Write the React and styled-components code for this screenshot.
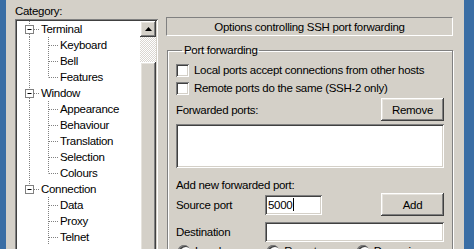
import React from 'react'
import styled, { createGlobalStyle } from 'styled-components'

const GlobalStyle = createGlobalStyle`
  html, body {
    margin: 0;
    padding: 0;
    background: #d4d0c8;
    overflow: hidden;
  }
  body {
    font-family: "Liberation Sans", Arial, sans-serif;
    font-size: 11.5px;
    letter-spacing: -0.3px;
    color: #000;
  }
`

const raised = `
  box-shadow: inset -1px -1px #404040, inset 1px 1px #ffffff,
    inset -2px -2px #808080, inset 2px 2px #e6e3dd;
`

const sunken = `
  box-shadow: inset 1px 1px #808080, inset -1px -1px #ffffff,
    inset 2px 2px #404040, inset -2px -2px #d4d0c8;
`

const Window = styled.div`
  display: flex;
  width: 474px;
  height: 249px;
  box-sizing: border-box;
  border-left: 6px solid #3a6ea5;
  border-right: 10px solid #3a6ea5;
  background: #d4d0c8;
  overflow: hidden;
`

const Sidebar = styled.div`
  display: flex;
  flex-direction: column;
  margin-left: 9px;
  width: 143px;
  padding-top: 4px;
  flex-shrink: 0;
`

const CategoryLabel = styled.div`
  height: 15px;
  line-height: 15px;
  flex-shrink: 0;
`

const TreeBox = styled.div`
  display: flex;
  flex-shrink: 0;
  height: 240px;
  padding: 2px;
  box-sizing: border-box;
  background: #fff;
  ${sunken}
`

const TreeList = styled.div`
  flex: 1;
  display: flex;
  flex-direction: column;
`

const TreeRow = styled.div`
  display: flex;
  align-items: center;
  height: 16px;
  flex-shrink: 0;
  white-space: nowrap;
  svg { flex-shrink: 0; }
`

const TreeText = styled.span`
  line-height: 15px;
`

const Scrollbar = styled.div`
  width: 16px;
  display: flex;
  flex-direction: column;
  flex-shrink: 0;
`

const ScrollButton = styled.div`
  width: 16px;
  height: 16px;
  flex-shrink: 0;
  box-sizing: border-box;
  background: #d4d0c8;
  display: flex;
  align-items: center;
  justify-content: center;
  ${raised}
`

const ScrollTrack = styled.div`
  height: ${p => p.$h}px;
  flex-shrink: 0;
  background-color: #ece9e3;
  background-image: repeating-conic-gradient(#ffffff 0 25%, #d4d0c8 0 50%);
  background-size: 2px 2px;
  opacity: 0.85;
`

const ScrollThumb = styled.div`
  flex: 1;
  background: #d4d0c8;
  ${raised}
`

const Panel = styled.div`
  display: flex;
  flex-direction: column;
  margin-left: 8px;
  width: 287px;
  padding-top: 17px;
  flex-shrink: 0;
`

const Header = styled.div`
  height: 19px;
  flex-shrink: 0;
  box-sizing: border-box;
  display: flex;
  align-items: center;
  justify-content: center;
  border-top: 1px solid #808080;
  border-left: 1px solid #808080;
  border-right: 1px solid #ffffff;
  border-bottom: 1px solid #ffffff;
  white-space: nowrap;
`

const Group = styled.fieldset`
  flex-shrink: 0;
  margin: 7px 0 0 1px;
  width: 286px;
  box-sizing: border-box;
  padding: 4px 8px 0 8px;
  border: 1px solid #808080;
  box-shadow: 1px 1px 0 #ffffff, inset 1px 1px 0 #ffffff;
  min-inline-size: 0;
`

const Legend = styled.legend`
  margin-left: 6px;
  padding: 0 2px;
  line-height: 14px;
  height: 14px;
`

const CheckRow = styled.label`
  display: flex;
  align-items: center;
  gap: 5px;
  height: 18px;
  white-space: nowrap;
`

const CheckBox = styled.span`
  width: 13px;
  height: 13px;
  box-sizing: border-box;
  background: #fff;
  flex-shrink: 0;
  ${sunken}
`

const Row = styled.div`
  display: flex;
  align-items: center;
  justify-content: ${p => (p.$spread ? 'space-between' : 'flex-start')};
  height: 23px;
  margin-top: ${p => p.$mt || 0}px;
  white-space: nowrap;
`

const Button = styled.div`
  width: 63px;
  height: 23px;
  box-sizing: border-box;
  display: flex;
  align-items: center;
  justify-content: center;
  background: #d4d0c8;
  margin-left: auto;
  ${raised}
`

const ListBox = styled.div`
  margin-top: 3px;
  height: 44px;
  background: #fff;
  ${sunken}
`

const SectionLabel = styled.div`
  margin-top: 10px;
  height: 15px;
  line-height: 15px;
`

const FieldLabel = styled.span`
  width: 89px;
  flex-shrink: 0;
`

const Input = styled.div`
  height: 20px;
  width: ${p => (p.$w ? `${p.$w}px` : 'auto')};
  flex: ${p => (p.$w ? '0 0 auto' : '1')};
  box-sizing: border-box;
  background: #fff;
  display: flex;
  align-items: center;
  padding-left: 3px;
  ${sunken}
`

const Caret = styled.span`
  width: 1px;
  height: 13px;
  background: #000;
  margin-left: 1px;
`

const RadioRow = styled.div`
  display: flex;
  margin-top: 2px;
  height: 16px;
`

const RadioOption = styled.label`
  display: flex;
  align-items: flex-start;
  gap: 5px;
  width: 93px;
  padding-left: 2px;
  white-space: nowrap;
`

const Radio = styled.span`
  width: 12px;
  height: 12px;
  border-radius: 50%;
  background: #fff;
  flex-shrink: 0;
  box-shadow: inset 1px 1px #808080, inset 2px 2px #404040,
    inset -1px -1px #ffffff;
  position: relative;
  &::after {
    content: '';
    display: ${p => (p.$on ? 'block' : 'none')};
    position: absolute;
    left: 4px;
    top: 4px;
    width: 4px;
    height: 4px;
    border-radius: 50%;
    background: #000;
  }
`

const dots = { stroke: '#808080', strokeWidth: 1, strokeDasharray: '1 1' }

const ParentGuide = ({ last }) => (
  <svg width="24" height="16" viewBox="0 0 24 16">
    <line x1="12.5" y1="0" x2="12.5" y2="4" {...dots} />
    {!last && <line x1="12.5" y1="13" x2="12.5" y2="16" {...dots} />}
    <line x1="17" y1="8.5" x2="23" y2="8.5" {...dots} />
    <rect x="8.5" y="4.5" width="8" height="8" fill="#fff" stroke="#808080" />
    <line x1="10.5" y1="8.5" x2="14.5" y2="8.5" stroke="#000" />
  </svg>
)

const ChildGuide = ({ parentLast, last }) => (
  <svg width="43" height="16" viewBox="0 0 43 16">
    {!parentLast && <line x1="12.5" y1="0" x2="12.5" y2="16" {...dots} />}
    <line x1="31.5" y1="0" x2="31.5" y2={last ? 8.5 : 16} {...dots} />
    <line x1="32" y1="8.5" x2="41" y2="8.5" {...dots} />
  </svg>
)

const tree = [
  { label: 'Terminal', children: ['Keyboard', 'Bell', 'Features'], closed: true },
  {
    label: 'Window',
    children: ['Appearance', 'Behaviour', 'Translation', 'Selection', 'Colours'],
    closed: true,
  },
  { label: 'Connection', children: ['Data', 'Proxy', 'Telnet'], closed: false, last: true },
]

const Tree = () => (
  <TreeList>
    {tree.map(node => (
      <React.Fragment key={node.label}>
        <TreeRow>
          <ParentGuide last={node.last} />
          <TreeText>{node.label}</TreeText>
        </TreeRow>
        {node.children.map((c, i) => (
          <TreeRow key={c}>
            <ChildGuide
              parentLast={node.last}
              last={node.closed && i === node.children.length - 1}
            />
            <TreeText>{c}</TreeText>
          </TreeRow>
        ))}
      </React.Fragment>
    ))}
  </TreeList>
)

export default function App() {
  return (
    <>
      <GlobalStyle />
      <Window>
        <Sidebar>
          <CategoryLabel>Category:</CategoryLabel>
          <TreeBox>
            <Tree />
            <Scrollbar>
              <ScrollButton>
                <svg width="7" height="4" viewBox="0 0 7 4">
                  <polygon points="3.5,0 7,4 0,4" fill="#000" />
                </svg>
              </ScrollButton>
              <ScrollTrack $h={25} />
              <ScrollThumb />
            </Scrollbar>
          </TreeBox>
        </Sidebar>
        <Panel>
          <Header>Options controlling SSH port forwarding</Header>
          <Group>
            <Legend>Port forwarding</Legend>
            <CheckRow>
              <CheckBox />
              Local ports accept connections from other hosts
            </CheckRow>
            <CheckRow>
              <CheckBox />
              Remote ports do the same (SSH-2 only)
            </CheckRow>
            <Row $spread $mt={1}>
              <span>Forwarded ports:</span>
              <Button>Remove</Button>
            </Row>
            <ListBox />
            <SectionLabel>Add new forwarded port:</SectionLabel>
            <Row>
              <FieldLabel>Source port</FieldLabel>
              <Input $w={57}>
                5000
                <Caret />
              </Input>
              <Button>Add</Button>
            </Row>
            <Row $mt={4}>
              <FieldLabel>Destination</FieldLabel>
              <Input />
            </Row>
            <RadioRow>
              <RadioOption>
                <Radio $on />
                Local
              </RadioOption>
              <RadioOption>
                <Radio />
                Remote
              </RadioOption>
              <RadioOption>
                <Radio />
                Dynamic
              </RadioOption>
            </RadioRow>
          </Group>
        </Panel>
      </Window>
    </>
  )
}
